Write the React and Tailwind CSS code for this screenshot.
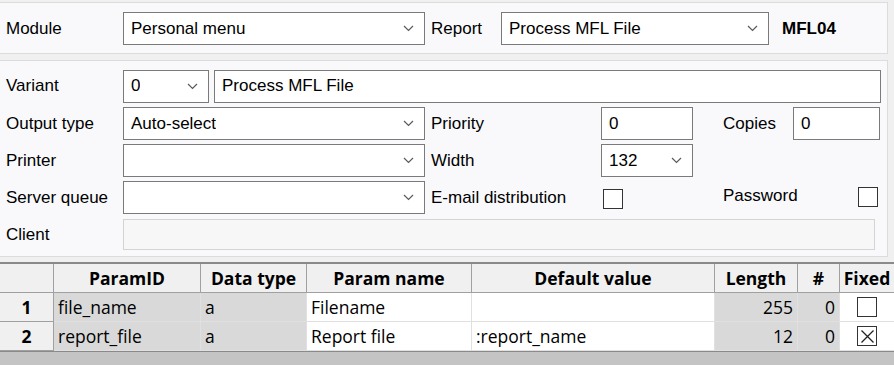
import { useState } from 'react';

const Chevron = () => (
  <svg width="11" height="7" viewBox="0 0 11 7" className="shrink-0">
    <path d="M1 1 L5.5 5.5 L10 1" fill="none" stroke="#5a5a5a" strokeWidth="1.2" />
  </svg>
);

function Select({ value, className }) {
  return (
    <div
      className={`flex items-center justify-between border border-[#7a7a7a] bg-white pl-[7px] pr-[10px] h-[33px] ${className}`}
    >
      <span className="truncate">{value}</span>
      <Chevron />
    </div>
  );
}

function TextBox({ value, className }) {
  return (
    <div className={`flex items-center border border-[#7a7a7a] bg-white pl-[7px] h-[33px] ${className}`}>
      {value}
    </div>
  );
}

function CheckBox({ checked, className }) {
  return (
    <div className={`w-[20px] h-[20px] border-[1.5px] border-[#333] bg-white flex items-center justify-center ${className}`}>
      {checked && (
        <svg width="13" height="13" viewBox="0 0 13 13">
          <path d="M0.5 0.5 L12.5 12.5 M12.5 0.5 L0.5 12.5" stroke="#222" strokeWidth="1.3" />
        </svg>
      )}
    </div>
  );
}

const columns = [
  { title: 'ParamID', key: 'id', cell: 'bg-[#d9d9d9]', align: 'text-left' },
  { title: 'Data type', key: 'type', cell: 'bg-[#d9d9d9]', align: 'text-left' },
  { title: 'Param name', key: 'name', cell: 'bg-white', align: 'text-left' },
  { title: 'Default value', key: 'def', cell: 'bg-white', align: 'text-left' },
  { title: 'Length', key: 'len', cell: 'bg-[#d9d9d9]', align: 'text-right' },
  { title: '#', key: 'num', cell: 'bg-[#d9d9d9]', align: 'text-right' },
];

const rows = [
  { id: 'file_name', type: 'a', name: 'Filename', def: '', len: '255', num: '0', fixed: false },
  { id: 'report_file', type: 'a', name: 'Report file', def: ':report_name', len: '12', num: '0', fixed: true },
];

export default function App() {
  const [params] = useState(rows);

  return (
    <div className="w-[894px] h-[365px] overflow-hidden bg-[#f0f0f0] text-[17px] text-black font-['Liberation_Sans',Arial,sans-serif]">
      {/* header panel */}
      <div className="mt-[2px] w-[888px] h-[52px] border border-l-0 border-[#dcdcdc] bg-[#f9f9fc] flex items-center pl-[6px] pt-[1px]">
        <span className="w-[117px]">Module</span>
        <Select value="Personal menu" className="w-[302px]" />
        <span className="ml-[6px] w-[70px]">Report</span>
        <Select value="Process MFL File" className="w-[268px]" />
        <span className="ml-[13px] font-bold">MFL04</span>
      </div>

      {/* settings panel */}
      <div className="mt-[6px] w-[888px] h-[197px] border border-l-0 border-[#dcdcdc] bg-[#f9f9fc] pl-[6px] pt-[8px]">
        <div className="flex items-center h-[34px]">
          <span className="w-[117px]">Variant</span>
          <Select value="0" className="w-[86px]" />
          <TextBox value="Process MFL File" className="ml-[5px] w-[667px]" />
        </div>
        <div className="flex items-center h-[33px] mt-[4px]">
          <span className="w-[117px]">Output type</span>
          <Select value="Auto-select" className="w-[302px]" />
          <span className="ml-[6px] w-[170px]">Priority</span>
          <TextBox value="0" className="w-[92px] h-[32px]" />
          <span className="ml-[30px] w-[70px]">Copies</span>
          <TextBox value="0" className="w-[87px] h-[32px]" />
        </div>
        <div className="flex items-center h-[33px] mt-[4px]">
          <span className="w-[117px]">Printer</span>
          <Select value="" className="w-[302px]" />
          <span className="ml-[6px] w-[170px]">Width</span>
          <Select value="132" className="w-[92px]" />
        </div>
        <div className="flex items-center h-[33px] mt-[4px]">
          <span className="w-[117px]">Server queue</span>
          <Select value="" className="w-[302px]" />
          <span className="ml-[6px] w-[172px]">E-mail distribution</span>
          <CheckBox className="mt-[3px]" />
          <span className="ml-[100px] w-[135px] -mt-[3px]">Password</span>
          <CheckBox className="-mt-[2px]" />
        </div>
        <div className="flex items-center h-[31px] mt-[5px]">
          <span className="w-[117px]">Client</span>
          <div className="w-[752px] h-[31px] border border-[#d4d4d4] bg-[#f7f7f7]" />
        </div>
      </div>

      {/* parameter grid */}
      <div className="mt-[5px] border-t-2 border-[#8a8a8a] bg-[#c4c4c4] font-['Open_Sans',sans-serif] text-[17.5px]">
        <div className="grid grid-cols-[54px_147px_106px_165px_243px_83px_42px_54px]">
          <div className="h-[29px] bg-[#f0f0f0] border-r border-b border-[#a0a0a0]" />
          {columns.map((c) => (
            <div
              key={c.key}
              className="h-[29px] bg-[#f0f0f0] border-r border-b border-[#a0a0a0] flex items-center justify-center font-bold"
            >
              {c.title}
            </div>
          ))}
          <div className="h-[29px] bg-[#f0f0f0] border-b border-[#a0a0a0] flex items-center justify-center font-bold">
            Fixed
          </div>

          {params.map((r, i) => (
            <div key={r.id} className="contents">
              <div className="h-[29px] bg-[#f0f0f0] border-r border-b border-[#a0a0a0] flex items-center justify-center font-bold">
                {i + 1}
              </div>
              {columns.map((c) => (
                <div
                  key={c.key}
                  className={`h-[29px] ${c.cell} ${c.align} border-r border-b border-[#e0e0e0] px-[4px] flex items-center ${
                    c.align === 'text-right' ? 'justify-end' : ''
                  }`}
                >
                  {r[c.key]}
                </div>
              ))}
              <div className="h-[29px] bg-white border-b border-[#e0e0e0] flex items-center justify-center">
                <CheckBox checked={r.fixed} />
              </div>
            </div>
          ))}
        </div>
        <div className="h-[14px] border-t border-[#8a8a8a]" />
      </div>
    </div>
  );
}
